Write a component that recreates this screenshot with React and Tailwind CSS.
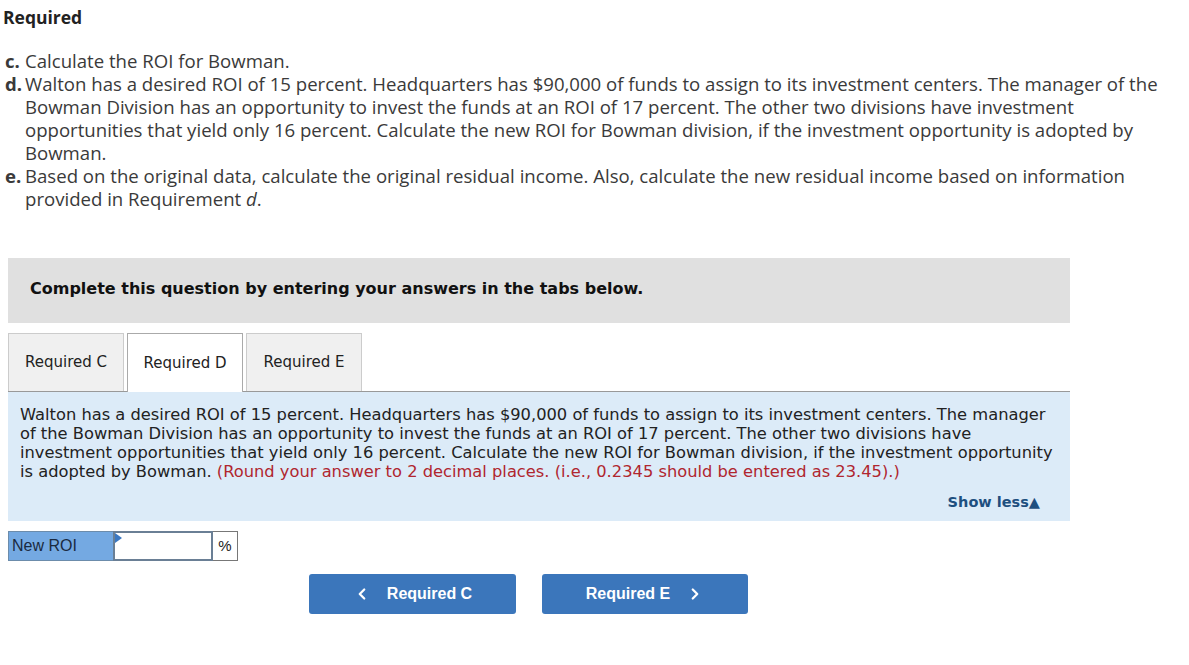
import { ChevronLeft, ChevronRight } from "lucide-react";

function Item({ letter, lines }) {
  return (
    <div className="flex">
      <span className="w-[25px] shrink-0 pl-[5px] font-bold">{letter}</span>
      <div>
        {lines.map((l, i) => (
          <div key={i} className="whitespace-nowrap">{l}</div>
        ))}
      </div>
    </div>
  );
}

export default function App() {
  const tabs = ["Required C", "Required D", "Required E"];
  const active = 1;

  return (
    <div className="w-[1189px] h-[665px] bg-white text-[#222] overflow-hidden">
      <div className="font-['Open_Sans','Liberation_Sans',sans-serif]">
        <div className="pl-[3px] pt-[6px] text-[17.5px] font-bold leading-[23px]">Required</div>
        <div className="mt-[20px] text-[18.6px] leading-[23px] text-[#3a3a3a]">
          <Item letter="c." lines={["Calculate the ROI for Bowman."]} />
          <Item
            letter="d."
            lines={[
              "Walton has a desired ROI of 15 percent. Headquarters has $90,000 of funds to assign to its investment centers. The manager of the",
              "Bowman Division has an opportunity to invest the funds at an ROI of 17 percent. The other two divisions have investment",
              "opportunities that yield only 16 percent. Calculate the new ROI for Bowman division, if the investment opportunity is adopted by",
              "Bowman.",
            ]}
          />
          <Item
            letter="e."
            lines={[
              "Based on the original data, calculate the original residual income. Also, calculate the new residual income based on information",
              <>provided in Requirement <i>d</i>.</>,
            ]}
          />
        </div>
      </div>

      <div className="ml-[8px] w-[1062px] mt-[48px] font-['DejaVu_Sans','Verdana',sans-serif]">
        <div className="h-[65px] bg-[#e0e0e0] flex items-center pl-[22px] pb-[4px] text-[16px] font-bold text-[#111]">
          Complete this question by entering your answers in the tabs below.
        </div>

        <div className="mt-[10px] flex gap-[3px] items-end">
          {tabs.map((t, i) => (
            <div
              key={t}
              className={`w-[116px] flex items-center justify-center text-[15px] border border-b-0 ${
                i === active ? "bg-white border-[#aaa] mb-[-1px] relative z-10 h-[59px]" : "bg-[#f0f0f0] border-[#ccc] h-[58px]"
              }`}
            >
              {t}
            </div>
          ))}
        </div>

        <div className="border-t border-[#999] bg-[#dcebf8] h-[130px] px-[12px] pt-[13px] text-[16.3px] leading-[19px] text-[#222]">
          <div className="whitespace-nowrap">Walton has a desired ROI of 15 percent. Headquarters has $90,000 of funds to assign to its investment centers. The manager</div>
          <div className="whitespace-nowrap">of the Bowman Division has an opportunity to invest the funds at an ROI of 17 percent. The other two divisions have</div>
          <div className="whitespace-nowrap">investment opportunities that yield only 16 percent. Calculate the new ROI for Bowman division, if the investment opportunity</div>
          <div className="whitespace-nowrap">
            is adopted by Bowman. <span className="text-[#b0262f]">(Round your answer to 2 decimal places. (i.e., 0.2345 should be entered as 23.45).)</span>
          </div>
          <div className="flex justify-end mt-[12px] pr-[18px]">
            <span className="text-[14.5px] font-bold text-[#1e4f7f]">Show less▲</span>
          </div>
        </div>

        <div className="mt-[10px] flex h-[30px] font-['Liberation_Sans','Arial',sans-serif]">
          <div className="w-[105px] bg-[#74a9e2] border border-[#6c8cab] border-r-0 flex items-center pl-[3px] text-[16px] text-[#1a2a40]">
            New ROI
          </div>
          <div className="relative w-[100px] bg-white border-2 border-[#6a7f95]">
            <div className="absolute left-0 top-0 w-0 h-0 border-t-[5px] border-b-[5px] border-l-[7px] border-t-transparent border-b-transparent border-l-[#3b78c2]" />
          </div>
          <div className="w-[25px] border border-[#777] border-l-0 flex items-center justify-center text-[15px] text-[#222]">
            %
          </div>
        </div>

        <div className="mt-[13px] flex gap-[26px] pl-[301px] font-['Liberation_Sans','Arial',sans-serif]">
          <button className="w-[207px] h-[40px] rounded-[3px] bg-[#3b76bb] text-white text-[16px] font-bold flex items-center justify-center gap-[16px]">
            <ChevronLeft className="w-[18px] h-[18px]" strokeWidth={3} />
            Required C
          </button>
          <button className="w-[206px] h-[40px] rounded-[3px] bg-[#3b76bb] text-white text-[16px] font-bold flex items-center justify-center gap-[16px]">
            Required E
            <ChevronRight className="w-[18px] h-[18px]" strokeWidth={3} />
          </button>
        </div>
      </div>
    </div>
  );
}
